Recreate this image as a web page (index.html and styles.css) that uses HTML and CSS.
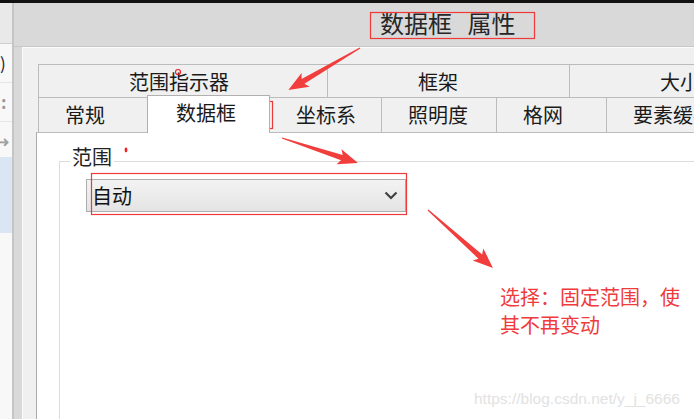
FILE: index.html
```html
<!DOCTYPE html>
<html>

<head>
    <meta charset="utf-8">
    <title>数据框 属性</title>
    <link rel="stylesheet" href="styles.css">
</head>

<body>
    <div class="screen">
        <div class="topbar"></div>
        <div class="desk">
            <!-- table of contents strip, mostly hidden behind the dialog -->
            <div class="sidebar">
                <div class="side-head"></div>
                <div class="side-row">)</div>
                <div class="side-row side-grip">:</div>
                <div class="side-row side-arrow">&#10140;</div>
                <div class="side-row side-sel"></div>
            </div>

            <div class="window">
                <div class="titlebar"><span class="title">数据框 属性</span></div>
                <div class="client">
                    <div class="tabs">
                        <div class="tab-row row-back">
                            <div class="tab" style="width:290px">范围指示器</div>
                            <div class="tab" style="width:243px">框架</div>
                            <div class="tab" style="width:290px">大小和位置</div>
                        </div>
                        <div class="tab-row row-front">
                            <div class="tab" style="width:110px">常规</div>
                            <div class="tab active" style="width:123px">数据框</div>
                            <div class="tab" style="width:113px">坐标系</div>
                            <div class="tab" style="width:116px">照明度</div>
                            <div class="tab" style="width:111px">格网</div>
                            <div class="tab" style="width:137px">要素缓存</div>
                        </div>
                        <div class="tab-page">
                            <fieldset class="group">
                                <legend>范围</legend>
                                <div class="combo">
                                    <span>自动</span>
                                    <svg class="chevron" width="14" height="9" viewBox="0 0 14 9">
                                        <polyline points="1.5,1.5 7,7 12.5,1.5" />
                                    </svg>
                                </div>
                            </fieldset>
                        </div>
                    </div>
                </div>
            </div>
        </div>

        <!-- red markup drawn on top of the dialog -->
        <svg class="marks" width="694" height="419" viewBox="0 0 694 419">
            <rect x="370.5" y="12.5" width="164" height="26" />
            <rect x="157.5" y="101.5" width="115" height="27" />
            <rect x="91.5" y="173.5" width="315" height="41" />

            <g class="arrow" transform="translate(360 48) rotate(149.7)">
                <polygon points="0,-0.6 66,-2.8 63,-8 83,0 63,8 66,2.8 0,0.6" />
            </g>
            <g class="arrow" transform="translate(282 138) rotate(18.2)">
                <polygon points="0,-0.6 63,-2.8 60,-8 80,0 60,8 63,2.8 0,0.6" />
            </g>
            <g class="arrow" transform="translate(428 210) rotate(41.7)">
                <polygon points="0,-0.6 70,-2.8 67,-8 87,0 67,8 70,2.8 0,0.6" />
            </g>

            <circle class="ring" cx="178" cy="72" r="2.5" />
            <path class="scribble" d="M206 98 Q212 96 218 98" />
            <circle class="dot" cx="157" cy="124" r="2" />
            <ellipse class="dot" cx="126" cy="150" rx="1.4" ry="2.4" />
        </svg>

        <p class="note">选择：固定范围，使<br>其不再变动</p>
        <div class="watermark">https://blog.csdn.net/y_j_6666</div>
    </div>
</body>

</html>
```

FILE: styles.css
```css
html,
body {
    margin: 0;
    padding: 0;
}

body {
    width: 694px;
    height: 419px;
    overflow: hidden;
    background-color: #f0f0f0;
    font-family: "Noto Sans CJK SC", "Noto Sans", sans-serif;
}

.screen {
    position: relative;
    display: flex;
    flex-direction: column;
    width: 694px;
    height: 419px;
}

.topbar {
    height: 3px;
    background-color: #111;
}

.desk {
    flex: 1;
    display: flex;
    min-height: 0;
}

/* left strip */
.sidebar {
    width: 12px;
    overflow: hidden;
    background-color: #f8f8f8;
}

.side-head {
    height: 40px;
    background-color: #e9e9e9;
    border-bottom: 1px solid #cfcfcf;
}

.side-row {
    height: 38px;
    border-bottom: 1px solid #e6e6e6;
    font-size: 17px;
    line-height: 38px;
    color: #1c1c2a;
    white-space: nowrap;
}

.side-grip {
    color: #9a9a9a;
    font-weight: bold;
    padding-left: 1px;
}

.side-arrow {
    color: #a0a0a0;
    font-size: 15px;
    margin-left: -3px;
    border-bottom: none;
}

.side-sel {
    height: 76px;
    margin-top: -3px;
    background-color: #dae6f3;
    border-bottom: none;
}

/* dialog window */
.window {
    flex: 1;
    display: flex;
    flex-direction: column;
    min-width: 0;
    background-color: #d9d9d9;
    border-left: 2px solid #c5c5c5;
}

.titlebar {
    height: 43px;
    border-bottom: 1px solid #c8c8c8;
    white-space: nowrap;
}

.title {
    display: inline-block;
    margin-left: 366px;
    padding-top: 5px;
    font-size: 24px;
    line-height: 30px;
    word-spacing: 10px;
    color: #262626;
}

.client {
    flex: 1;
    margin-left: 8px;
    border-left: 1px solid #fbfbfb;
    border-top: 1px solid #fbfbfb;
    background-color: #f0f0f0;
    overflow: hidden;
    display: flex;
    flex-direction: column;
}

/* tab control */
.tabs {
    flex: 1;
    display: flex;
    flex-direction: column;
    margin-left: 13px;
    margin-top: 16px;
}

.tab-row {
    display: flex;
    align-items: flex-start;
    padding-left: 2px;
    white-space: nowrap;
}

.row-back {
    height: 33px;
}

.row-front {
    height: 35px;
}

.tab {
    flex: none;
    box-sizing: border-box;
    display: flex;
    align-items: center;
    justify-content: flex-start;
    margin-left: -1px;
    border: 1px solid #bcbcbc;
    border-bottom: none;
    background-color: #f0f0f0;
    font-size: 20px;
    line-height: 1;
    color: #1a1a1a;
}

.tab:first-child {
    margin-left: 0;
}

.row-back .tab {
    height: 33px;
    padding-top: 2px;
    padding-left: 90px;
}

.row-front .tab {
    height: 35px;
    padding-left: 26px;
}

.row-front .tab.active {
    position: relative;
    z-index: 2;
    height: 38px;
    margin-top: -2px;
    padding-left: 28px;
    padding-bottom: 4px;
    background-color: #fff;
    border-color: #b0b0b0;
}

.tab-page {
    flex: 1;
    background-color: #fff;
    border-left: 1px solid #ababab;
    border-top: 1px solid #bcbcbc;
    overflow: hidden;
}

/* 范围 group box */
.group {
    width: 700px;
    height: 320px;
    margin: 14px 0 0 22px;
    padding: 4px 0 0 10px;
    border: 1px solid #dcdcdc;
    box-sizing: border-box;
}

.group legend {
    padding: 0 2px 8px 2px;
    font-size: 20px;
    line-height: 20px;
    color: #222;
}

.combo {
    width: 320px;
    height: 33px;
    box-sizing: border-box;
    margin-left: 16px;
    display: flex;
    align-items: center;
    justify-content: space-between;
    padding: 0 7px 0 5px;
    border: 1px solid #adadad;
    background: linear-gradient(#f3f3f3, #e4e4e4);
    font-size: 20px;
    line-height: 1;
    color: #111;
}

.chevron polyline {
    fill: none;
    stroke: #404040;
    stroke-width: 2.2;
}

/* markup layer */
.marks {
    position: absolute;
    left: 0;
    top: 0;
    pointer-events: none;
}

.marks rect {
    fill: none;
    stroke: #f03a3a;
    stroke-width: 1.2;
}

.arrow polygon {
    fill: #f23d3d;
}

.ring {
    fill: none;
    stroke: #e22;
    stroke-width: 1.2;
}

.scribble {
    fill: none;
    stroke: #e22;
    stroke-width: 2.6;
    stroke-linecap: round;
}

.dot {
    fill: #e22;
}

.note {
    position: absolute;
    left: 500px;
    top: 283px;
    margin: 0;
    font-size: 20px;
    line-height: 28px;
    color: #ef3b3b;
    white-space: nowrap;
}

.watermark {
    position: absolute;
    left: 474px;
    top: 390px;
    font-family: "Liberation Sans", Arial, sans-serif;
    font-size: 15.5px;
    line-height: 18px;
    color: #e2e2e2;
    white-space: nowrap;
}
```
